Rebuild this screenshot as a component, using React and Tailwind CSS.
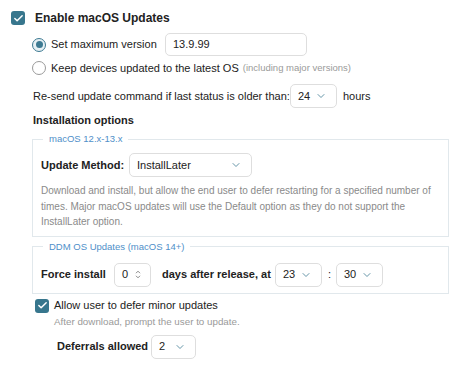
import { ChevronDown, Check } from 'lucide-react'

// Native-looking select box: value on the left, small teal chevron on the right
function Select({ value, width }) {
  return (
    <div
      className={`flex items-center justify-between h-[24px] rounded-[5px] border border-[#dedede] bg-white pl-[7px] pr-[9px] ${width}`}
    >
      <span className="text-[11px] text-[#222]">{value}</span>
      <ChevronDown size={12} strokeWidth={1.6} className="text-[#3d7a92]" />
    </div>
  )
}

function Checkbox() {
  return (
    <span className="flex items-center justify-center w-[14px] h-[14px] rounded-[3px] bg-[#37768d] shrink-0">
      <Check size={11} strokeWidth={3.2} className="text-white" />
    </span>
  )
}

export default function App() {
  return (
    <div
      className="w-[474px] h-[369px] bg-white text-[#222] overflow-hidden"
      style={{ fontFamily: '"Liberation Sans", Arial, sans-serif' }}
    >
      <div className="pl-[11px] pt-[10px]">
        <div className="flex items-center gap-[10px] h-[16px]">
          <Checkbox />
          <span className="text-[12px] font-bold">Enable macOS Updates</span>
        </div>
      </div>

      <div className="pl-[32px] pr-[25px]">
        <div className="flex items-center mt-[7px] h-[23px]">
          <span className="w-[14px] h-[14px] rounded-full border-[1.5px] border-[#3d7a92] bg-[#e6f0f4] flex items-center justify-center shrink-0">
            <span className="w-[7px] h-[7px] rounded-full bg-[#3d7a92]" />
          </span>
          <span className="ml-[5px] w-[114px] text-[11px]">Set maximum version</span>
          <div className="w-[142px] h-[23px] rounded-[5px] border border-[#dedede] flex items-center pl-[7px] text-[11px]">
            13.9.99
          </div>
        </div>

        <div className="flex items-center mt-[2px] h-[20px]">
          <span className="w-[14px] h-[14px] rounded-full border border-[#9a9a9a] bg-white shrink-0" />
          <span className="ml-[5px] text-[11px]">Keep devices updated to the latest OS</span>
          <span className="ml-[4px] text-[9.5px] text-[#9a9a9a]">(including major versions)</span>
        </div>

        <div className="flex items-center mt-[6px] h-[24px] pl-[1px]">
          <span className="w-[257px] text-[11px]">Re-send update command if last status is older than:</span>
          <Select value="24" width="w-[47px]" />
          <span className="ml-[6px] text-[11px]">hours</span>
        </div>

        <div className="mt-[5px] h-[14px] leading-[14px] pl-[1px] text-[11px] font-bold">Installation options</div>

        <fieldset className="mt-[5px] w-[417px] border border-[#e1e8ec] pl-[8px] pr-[7px] pb-[6px]">
          <legend className="ml-[2px] px-[6px] leading-[14px] text-[9.5px] text-[#4f8fc9]">macOS 12.x-13.x</legend>
          <div className="flex items-center mt-[7px]">
            <span className="w-[88px] text-[11px] font-bold">Update Method:</span>
            <Select value="InstallLater" width="w-[123px]" />
          </div>
          <p className="mt-[6px] text-[10px] leading-[15.5px] text-[#8a8a8a]">
            Download and install, but allow the end user to defer restarting for a specified number of
            times. Major macOS updates will use the Default option as they do not support the
            InstallLater option.
          </p>
        </fieldset>

        <fieldset className="mt-[3px] w-[417px] border border-[#e1e8ec] pl-[8px] pr-[7px] pb-[6px]">
          <legend className="ml-[2px] px-[6px] leading-[14px] text-[9.5px] text-[#4f8fc9]">DDM OS Updates (macOS 14+)</legend>
          <div className="flex items-center mt-[9px]">
            <span className="w-[73px] text-[11px] font-bold">Force install</span>
            <div className="w-[37px] h-[24px] rounded-[5px] border border-[#dedede] flex items-center justify-between pl-[7px] pr-[9px]">
              <span className="text-[11px]">0</span>
              <svg width="6" height="9" viewBox="0 0 6 9" fill="none" stroke="#888" strokeWidth="1">
                <path d="M1 3.2 L3 1.2 L5 3.2" />
                <path d="M1 5.8 L3 7.8 L5 5.8" />
              </svg>
            </div>
            <span className="ml-[11px] w-[113px] text-[11px] font-bold">days after release, at</span>
            <Select value="23" width="w-[47px]" />
            <span className="ml-[6px] w-[8px] text-[11px]">:</span>
            <Select value="30" width="w-[47px]" />
          </div>
        </fieldset>

        <div className="flex items-center mt-[5px] pl-[3px] h-[14px]">
          <Checkbox />
          <span className="ml-[5px] text-[11px]">Allow user to defer minor updates</span>
        </div>
        <div className="pl-[22px] mt-[2px] h-[13px] leading-[13px] text-[9.8px] text-[#9a9a9a]">
          After download, prompt the user to update.
        </div>

        <div className="flex items-center mt-[7px] pl-[25px]">
          <span className="w-[94px] text-[11px] font-bold">Deferrals allowed</span>
          <Select value="2" width="w-[45px]" />
        </div>
      </div>
    </div>
  )
}
